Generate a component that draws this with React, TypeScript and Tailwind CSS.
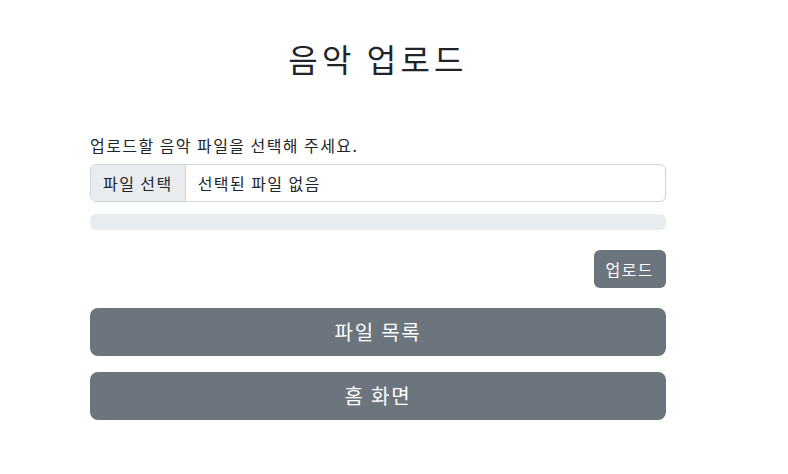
export default function App() {
  return (
    <div
      className="min-h-[474px] bg-white text-[#212529] tracking-[0.09em]"
      style={{ fontFamily: '"Noto Sans CJK KR", "Noto Sans", sans-serif' }}
    >
      <div className="ml-[90px] w-[576px] pt-[39px]">
        <h1 className="text-center text-[32px] leading-[38px] font-normal tracking-[0.13em]">음악 업로드</h1>

        <div className="mt-[56px]">
          <label className="block text-base leading-6 mb-[7px]">업로드할 음악 파일을 선택해 주세요.</label>
          <div className="flex h-[38px] border border-[#ced4da] rounded-[6px] overflow-hidden text-base">
            <div className="flex items-center px-3 bg-[#e9ecef] border-r border-[#ced4da]">파일 선택</div>
            <div className="flex items-center px-3">선택된 파일 없음</div>
          </div>

          <div className="mt-3 h-4 rounded-[6px] bg-[#e9ecef]" />

          <div className="flex justify-end mt-5">
            <button className="h-[38px] px-3 rounded-[6px] bg-[#6c757d] text-white text-base tracking-[0.09em]">업로드</button>
          </div>

          <button className="mt-5 w-full h-[48px] rounded-[8px] bg-[#6c757d] text-white text-[20px] tracking-[0.09em]">파일 목록</button>
          <button className="mt-4 w-full h-[48px] rounded-[8px] bg-[#6c757d] text-white text-[20px] tracking-[0.09em]">홈 화면</button>
        </div>
      </div>
    </div>
  );
}
